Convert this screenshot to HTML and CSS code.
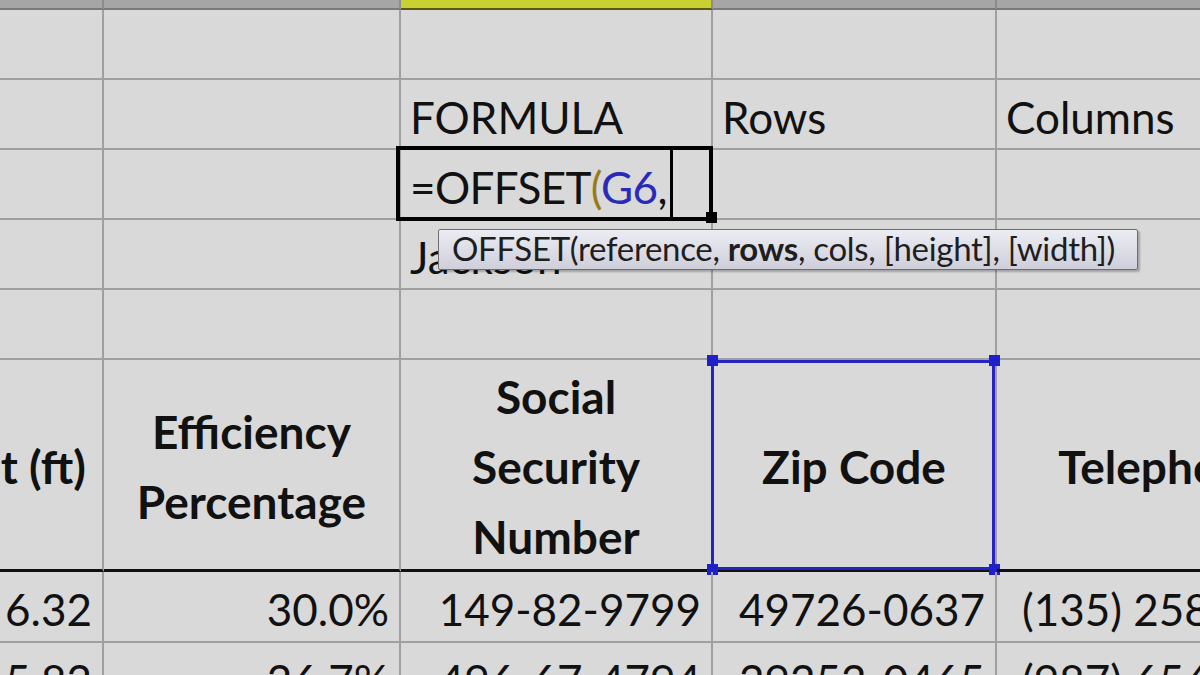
FILE: index.html
```html
<!DOCTYPE html>
<html lang="en">
<head>
<meta charset="utf-8">
<title>OFFSET formula</title>
<link rel="stylesheet" href="styles.css">
</head>
<body>
<div class="sheet">
  <div class="hd"></div><div class="hd"></div><div class="hd act"></div><div class="hd"></div><div class="hd"></div>

  <div class="c"></div><div class="c"></div><div class="c"></div><div class="c"></div><div class="c"></div>

  <div class="c"></div><div class="c"></div><div class="c">FORMULA</div><div class="c">Rows</div><div class="c">Columns</div>

  <div class="c"></div><div class="c"></div>
  <div class="c edit"><span class="ftext">=OFFSET<span class="paren">(</span><span class="ref">G6</span>,</span><span class="caret"></span>
    <span class="cellbox"></span><span class="handle"></span>
    <div class="tip">OFFSET(reference, <b>rows</b>, cols, [height], [width])</div>
  </div>
  <div class="c"></div><div class="c"></div>

  <div class="c"></div><div class="c"></div><div class="c">Jackson</div><div class="c"></div><div class="c"></div>

  <div class="c"></div><div class="c"></div><div class="c"></div><div class="c"></div><div class="c"></div>

  <div class="c th right">Height (ft)</div>
  <div class="c th"><span>Efficiency<br>Percentage</span></div>
  <div class="c th"><span>Social<br>Security<br>Number</span></div>
  <div class="c th sel"><span>Zip Code</span>
    <span class="selbox"></span>
    <span class="knob tl"></span><span class="knob tr"></span><span class="knob bl"></span><span class="knob br"></span>
  </div>
  <div class="c th"><span>Telephone</span></div>

  <div class="c num">6.32</div><div class="c num">30.0%</div><div class="c num">149-82-9799</div><div class="c num">49726-0637</div><div class="c phone">(135) 258-4471</div>

  <div class="c num">5.82</div><div class="c num">26.7%</div><div class="c num">496-67-4794</div><div class="c num">29252-0465</div><div class="c phone">(987) 654-3210</div>
</div>
</body>
</html>
```
FILE: styles.css
```css
html, body {
  margin: 0;
  padding: 0;
  width: 1200px;
  height: 675px;
  overflow: hidden;
  background: #d9d9d9;
}

.sheet {
  display: grid;
  grid-template-columns: 304px 297px 312px 284px 336px;
  grid-template-rows: 10px 70px 70px 70px 70px 70px 212px 71px 70px;
  margin-left: -200px;
  font-family: "Lato", "Carlito", sans-serif;
  font-size: 44px;
  color: #111;
}

.hd {
  background: #a6a6a6;
  border-right: 2px solid #8c8c8c;
  border-bottom: 2px solid #7a7a7a;
  box-sizing: border-box;
}
.hd.act {
  background: #c8d032;
  border-bottom-color: #5c5a12;
}

.c {
  box-sizing: border-box;
  border-right: 2px solid #a0a0a0;
  border-bottom: 2px solid #a0a0a0;
  padding: 0 9px;
  line-height: 74px;
  white-space: nowrap;
  position: relative;
}

.edit {
  z-index: 3;
}
.ftext { letter-spacing: -0.6px; }
.paren { color: #9a7a18; }
.ref { color: #2a2ab8; }
.caret {
  display: inline-block;
  width: 3px;
  height: 68px;
  background: #000;
  margin-left: 3px;
  vertical-align: top;
}
.cellbox {
  position: absolute;
  left: -5px;
  top: -4px;
  right: -2px;
  bottom: -3px;
  border: 4px solid #000;
}
.handle {
  position: absolute;
  right: -6px;
  bottom: -5px;
  width: 11px;
  height: 11px;
  background: #000;
}

.tip {
  position: absolute;
  left: 37px;
  top: 79px;
  width: 700px;
  height: 41px;
  box-sizing: border-box;
  border: 1px solid #6e6e6e;
  border-radius: 2px;
  background: linear-gradient(#ececf3, #cfcfdb);
  box-shadow: 2px 2px 2px rgba(0,0,0,0.25);
  font-size: 33px;
  line-height: 37px;
  padding-left: 13px;
  color: #1e1e1e;
  letter-spacing: -0.3px;
}
.tip b { font-weight: 700; }

.th {
  border-bottom: 3px solid #111;
  display: flex;
  align-items: center;
  justify-content: center;
  text-align: center;
  font-weight: 700;
  font-size: 46px;
  line-height: 70px;
  padding-top: 4px;
}
.th.right {
  justify-content: flex-end;
  padding-right: 16px;
}

.sel .selbox {
  position: absolute;
  left: -2px;
  top: 0;
  right: 0;
  bottom: -1px;
  border: 3px solid #2424c2;
}
.knob {
  position: absolute;
  width: 11px;
  height: 11px;
  background: #2020c8;
}
.knob.tl { left: -6px; top: -5px; }
.knob.tr { right: -5px; top: -5px; }
.knob.bl { left: -6px; bottom: -6px; }
.knob.br { right: -5px; bottom: -6px; }

.num {
  text-align: right;
  padding-right: 10px;
  overflow: hidden;
}
.phone {
  padding-left: 25px;
}
```
